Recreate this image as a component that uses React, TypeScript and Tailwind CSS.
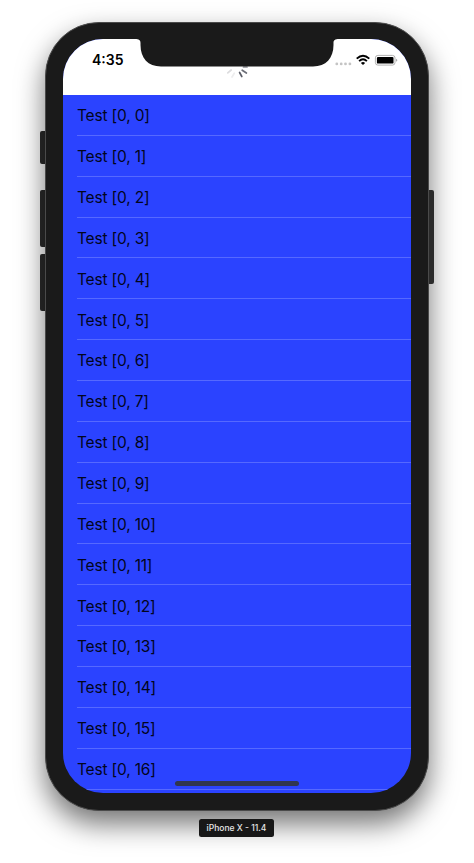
const rows = Array.from({ length: 17 }, (_, i) => `Test [0, ${i}]`);

function Notch() {
  return (
    <svg className="absolute inset-x-0 -top-px mx-auto" width="204" height="30" viewBox="0 0 204 30">
      <path d="M0 0H204V1C200 1 198.500 2 198.500 5V7C198.500 20 191 28.500 178 28.500H26C13 28.500 5.500 20 5.500 7V5C5.500 2 4 1 0 1Z" fill="#1a1a1a" />
    </svg>
  );
}

function Spinner() {
  return (
    <svg className="mx-auto" width="28" height="14" viewBox="0 0 28 14" strokeWidth="1.700" strokeLinecap="round">
      <path d="M4.800 6.900L8.200 4" stroke="#dcdcde" />
      <path d="M9 11L11.300 7.200" stroke="#ededee" />
      <path d="M16.600 6.500L18.800 10.500" stroke="#5c5e68" />
      <path d="M19.200 4.200L23.400 7" stroke="#6d6f78" />
      <path d="M20.500 1H24" stroke="#8b8d94" />
    </svg>
  );
}

function StatusIcons() {
  return (
    <svg className="mb-[-3px] shrink-0" width="66" height="16" viewBox="0 0 66 16">
      <g fill="#c4c4c4">
        <circle cx="2.800" cy="10.900" r="1.400" />
        <circle cx="7.200" cy="10.900" r="1.400" />
        <circle cx="11.500" cy="10.900" r="1.400" />
        <circle cx="15.900" cy="10.900" r="1.400" />
      </g>
      <g fill="none" stroke="#000" strokeWidth="1.900">
        <path d="M22.700 5.600Q29 -0.300 35.300 5.600" />
        <path d="M25.100 8.100Q29 4.500 32.900 8.100" />
      </g>
      <path d="M26.900 9.900Q29 8.200 31.100 9.900L29 12Z" />
      <rect x="41.400" y="2.400" width="19.600" height="9.700" rx="2.500" fill="none" stroke="#a8a8a8" strokeWidth="0.900" />
      <rect x="42.900" y="3.900" width="16.600" height="6.700" rx="1.200" />
      <path d="M62.200 5.700Q64.400 7.200 62.200 8.800Z" fill="#999" />
    </svg>
  );
}

export default function App() {
  return (
    <main className="flex h-[863px] w-[474px] flex-col items-center overflow-hidden bg-white pt-[21.500px] font-['Inter',sans-serif] text-black">
      <div className="flex h-[789px] shrink-0">
        <div className="flex w-[5px] flex-col pt-[109px]">
          <div className="h-[33px] rounded-l-[2px] bg-[#2b2b2b]" />
          <div className="mt-[26px] h-[57px] rounded-l-[2px] bg-[#2b2b2b]" />
          <div className="mt-[7px] h-[57px] rounded-l-[2px] bg-[#2b2b2b]" />
        </div>
        <div className="flex w-[384px] flex-col items-center rounded-[54px] border border-[#4a4a4a] bg-[#1a1a1a] pt-[16.500px] shadow-[0_13px_28px_rgba(0,0,0,0.55)]">
          <div className="relative h-[754px] w-[348px] overflow-hidden rounded-[40px] bg-[#2b43ff]">
            <header className="flex h-14 flex-col bg-white">
              <div className="flex h-[27px] items-end justify-between pl-[29px] pr-[11px]">
                <time className="text-[14px] font-semibold leading-[13px]">4:35</time>
                <StatusIcons />
              </div>
              <Spinner />
            </header>
            <Notch />
            <ul className="pl-[14px]">
              {rows.map((label) => (
                <li key={label} className="flex h-[40.860px] items-center border-b border-[#5669ff] pt-[2px] text-[15.500px] tracking-[-0.012em] text-[#02051c]">
                  {label}
                </li>
              ))}
            </ul>
            <div className="absolute inset-x-0 bottom-[7.500px] mx-auto h-[5px] w-[124px] rounded-full bg-[#31364f]" />
          </div>
        </div>
        <div className="w-[5px] pt-[168px]">
          <div className="h-[94px] rounded-r-[2px] bg-[#2b2b2b]" />
        </div>
      </div>
      <div className="z-10 mr-px mt-[8px] flex h-[18px] w-[75px] shrink-0 items-center justify-center rounded-[2.500px] bg-[#171717] pt-px text-[8.500px] font-medium text-[#e7e7e7]">
        iPhone X - 11.4
      </div>
    </main>
  );
}
